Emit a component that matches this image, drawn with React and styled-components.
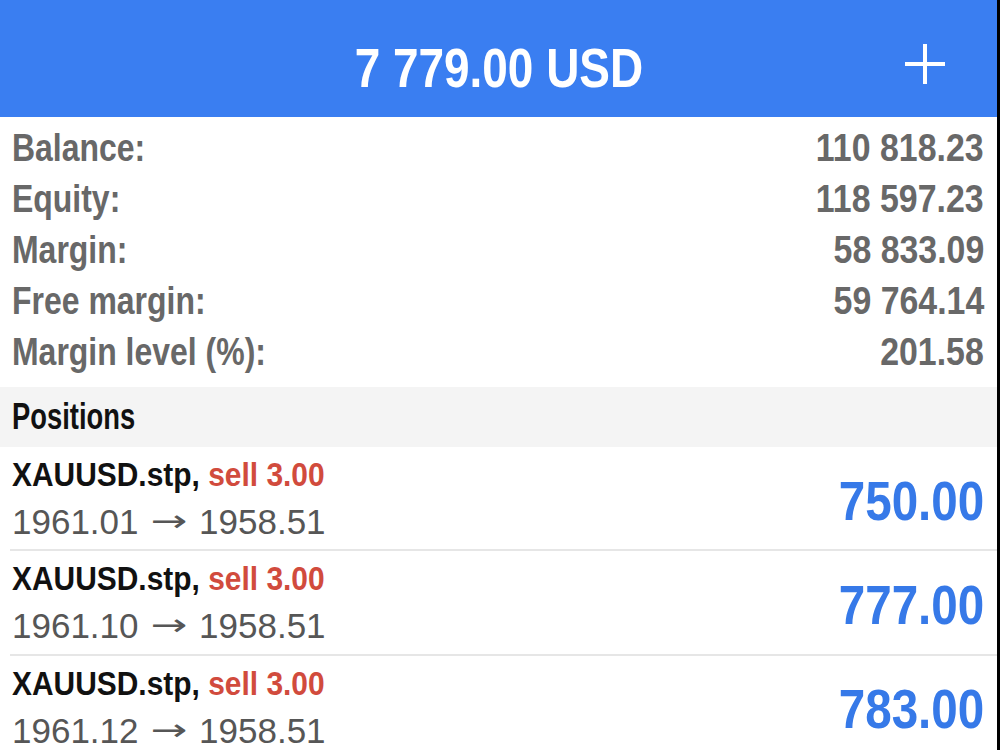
import React from "react";
import styled, { createGlobalStyle } from "styled-components";

const Global = createGlobalStyle`
  html, body {
    margin: 0;
    padding: 0;
    background: #fff;
    overflow: hidden;
  }
  body {
    font-family: "Liberation Sans", Arial, Helvetica, sans-serif;
  }
`;

const Frame = styled.div`
  display: flex;
  width: 1000px;
  height: 750px;
  overflow: hidden;
  background: #fff;
`;

const Screen = styled.main`
  flex: 1;
  min-width: 0;
  display: flex;
  flex-direction: column;
  & > * {
    flex-shrink: 0;
  }
`;

const Bezel = styled.div`
  width: 3px;
  flex-shrink: 0;
  background: #000;
`;

const Header = styled.header`
  height: 117px;
  box-sizing: border-box;
  padding-top: 19px;
  background: #3a7ef1;
  display: grid;
  grid-template-columns: 1fr auto 1fr;
  align-items: center;
`;

const Title = styled.h1`
  grid-column: 2;
  margin: 0;
  font-size: 56px;
  line-height: 1;
  font-weight: 700;
  color: #fff;
  white-space: nowrap;
  transform: scaleX(0.82);
  transform-origin: center;
`;

const AddButton = styled.button`
  grid-column: 3;
  justify-self: end;
  margin: 0 51px 9px 0;
  width: 42px;
  height: 42px;
  padding: 0;
  border: 0;
  background: none;
  display: flex;
  align-items: center;
  justify-content: center;
`;

const Summary = styled.section`
  padding: 6px 13px 9px 12px;
  display: flex;
  flex-direction: column;
`;

const SummaryRow = styled.div`
  height: 51px;
  flex-shrink: 0;
  display: flex;
  align-items: center;
  justify-content: space-between;
`;

const Label = styled.span`
  display: inline-block;
  font-size: 38.5px;
  line-height: 1;
  font-weight: 700;
  color: #686868;
  white-space: nowrap;
  transform: scaleX(0.83);
  transform-origin: left center;
`;

const Amount = styled.span`
  display: inline-block;
  font-size: 38.5px;
  line-height: 1;
  font-weight: 700;
  color: #686868;
  white-space: nowrap;
  transform: scaleX(0.88);
  transform-origin: right center;
`;

const SectionHeader = styled.div`
  height: 60px;
  box-sizing: border-box;
  padding-left: 12px;
  background: #f4f4f4;
  display: flex;
  align-items: center;
`;

const SectionTitle = styled.h2`
  margin: 0;
  font-size: 36px;
  line-height: 1;
  font-weight: 700;
  color: #111;
  white-space: nowrap;
  transform: scaleX(0.76);
  transform-origin: left center;
`;

const PositionList = styled.ul`
  list-style: none;
  margin: 0;
  padding: 0;
`;

const PositionRow = styled.li`
  height: 104.3px;
  box-sizing: border-box;
  margin-left: 10px;
  padding: 0 13px 0 2px;
  border-bottom: 2px solid #e6e6e6;
  display: flex;
  align-items: center;
  justify-content: space-between;
`;

const PositionInfo = styled.div`
  display: flex;
  flex-direction: column;
  padding-top: 2px;
`;

const SymbolLine = styled.div`
  font-size: 34px;
  line-height: 49px;
  font-weight: 700;
  color: #111;
  white-space: nowrap;
  transform: scaleX(0.88);
  transform-origin: left center;
`;

const Side = styled.span`
  color: #d14b3d;
`;

const PriceLine = styled.div`
  font-size: 35px;
  line-height: 45px;
  margin-bottom: 4px;
  font-weight: 400;
  color: #565656;
  white-space: nowrap;
`;

const Arrow = styled.span`
  display: inline-block;
  margin: 0 14px 0 13px;
  font-family: "DejaVu Sans", sans-serif;
  font-size: 40px;
  line-height: 1;
  transform: scale(1.1, 0.75);
`;

const Profit = styled.span`
  display: inline-block;
  margin-top: 5px;
  font-size: 56px;
  line-height: 1;
  font-weight: 700;
  color: #3679e8;
  white-space: nowrap;
  transform: scaleX(0.85);
  transform-origin: right center;
`;

const summary = [
  ["Balance:", "110 818.23"],
  ["Equity:", "118 597.23"],
  ["Margin:", "58 833.09"],
  ["Free margin:", "59 764.14"],
  ["Margin level (%):", "201.58"],
];

const positions = [
  { open: "1961.01", current: "1958.51", profit: "750.00" },
  { open: "1961.10", current: "1958.51", profit: "777.00" },
  { open: "1961.12", current: "1958.51", profit: "783.00" },
];

function PlusIcon() {
  return (
    <svg width="42" height="42" viewBox="0 0 42 42" aria-hidden="true">
      <path d="M21 1V41M1 21H41" stroke="#fff" strokeWidth="4" fill="none" />
    </svg>
  );
}

export default function App() {
  return (
    <>
      <Global />
      <Frame>
        <Screen>
          <Header>
            <Title>7 779.00 USD</Title>
            <AddButton aria-label="Add">
              <PlusIcon />
            </AddButton>
          </Header>
          <Summary>
            {summary.map(([label, value]) => (
              <SummaryRow key={label}>
                <Label>{label}</Label>
                <Amount>{value}</Amount>
              </SummaryRow>
            ))}
          </Summary>
          <SectionHeader>
            <SectionTitle>Positions</SectionTitle>
          </SectionHeader>
          <PositionList>
            {positions.map((p, i) => (
              <PositionRow key={i}>
                <PositionInfo>
                  <SymbolLine>
                    XAUUSD.stp, <Side>sell 3.00</Side>
                  </SymbolLine>
                  <PriceLine>
                    {p.open}
                    <Arrow>→</Arrow>
                    {p.current}
                  </PriceLine>
                </PositionInfo>
                <Profit>{p.profit}</Profit>
              </PositionRow>
            ))}
          </PositionList>
        </Screen>
        <Bezel />
      </Frame>
    </>
  );
}
